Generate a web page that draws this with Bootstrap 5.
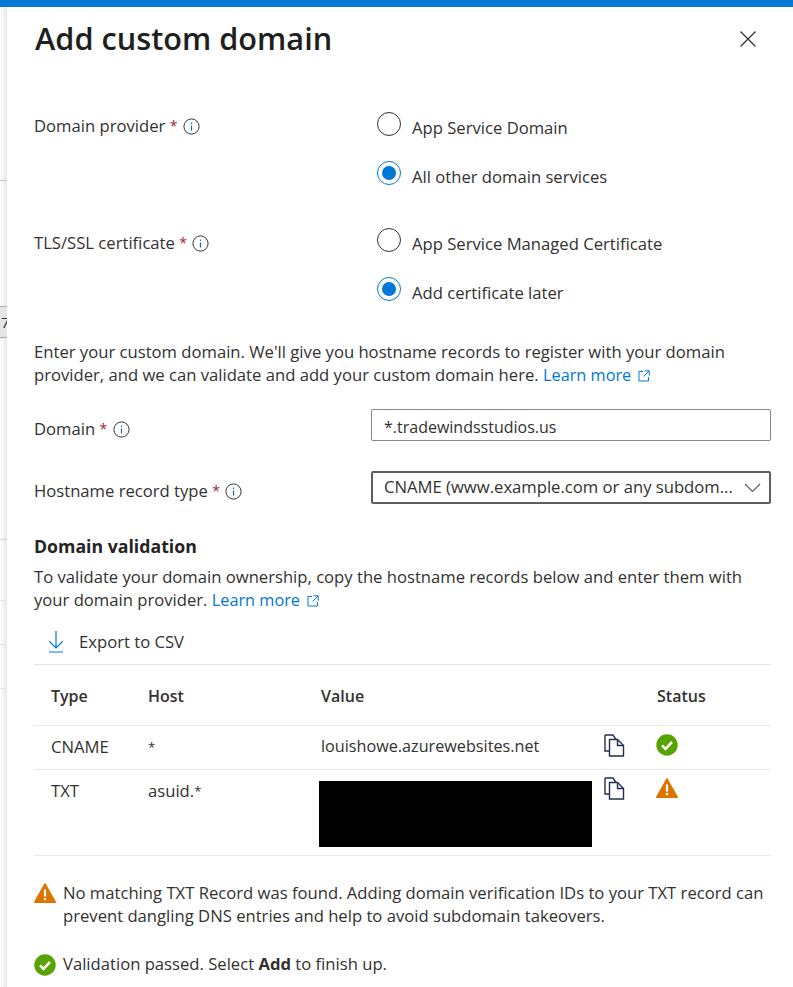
<!DOCTYPE html>
<html lang="en"><head><meta charset="utf-8"><title>Add custom domain</title>
<link rel="stylesheet" href="https://cdn.jsdelivr.net/npm/bootstrap@5.3.0/dist/css/bootstrap.min.css">
<style>
html,body{height:987px;overflow:hidden}
body{font-family:"Open Sans","Noto Sans",sans-serif;font-size:16.65px;color:#323130;background:#fff}
.topbar{height:7px;background:#0078d4}
.shell{height:980px}
.backdrop{width:7px;flex:none;background:linear-gradient(90deg,#fff,#e8e8e8);overflow:hidden}
.bl{height:1px;background:#d4d4d4}
.bl1{margin-top:173px;background:#c4c4c4}
.bcell{margin-top:125px;height:32px;border-top:1px solid #a8a8a8;border-bottom:1px solid #a8a8a8;background:#e6e6e6;font-size:15px;line-height:30px;text-indent:1px;color:#333}
.bl2{margin-top:201px}
.bl3{margin-top:60px;background:#e2e2e2}
.bl4,.bl5{margin-top:43px;background:#e2e2e2}
.panel{flex:1;min-width:0;padding:0 22px 0 27px;line-height:23px}
.head{height:64px;padding-top:11px}
.title{font-size:30.7px;font-weight:600;line-height:40px;margin:0 0 0 1px;color:#201f1e}
.closex{margin:12px 14px 0 0}
.req{color:#a4262c;font-size:14px;vertical-align:1px}
.lab{width:337px;flex:none}
.lab svg{margin-left:1px;vertical-align:-3px}
.labt{padding-top:2px}
.labu{padding-top:3px}
.radios{display:flex;flex-direction:column;gap:25px}
.opt{display:flex;gap:11px;height:24px;padding-left:6px}
.opt span{line-height:24px;position:relative;top:4px}
.ri{width:24px;height:24px;border-radius:50%;border:1.3px solid #323130;flex:none;background:#fff;position:relative}
.ri.on{border-color:#0078d4}
.ri.on::after{content:"";position:absolute;inset:3.7px;border-radius:50%;background:#0078d4}
.g1{margin-top:41px}
.g2{margin-top:43px}
.intro{margin:39px 0 0}
a.lk{color:#0078d4;text-decoration:none;font-size:16.3px}
a.lk svg{margin-left:3px;vertical-align:-1px}
.r1{margin-top:22px}
.r2{margin-top:30px}
.lab2{padding-top:8px}
.inp{flex:1;height:32px;border:1px solid #8a8886;border-radius:2px;padding:0 12px;line-height:35px;font-size:16px;overflow:hidden}
.sel{flex:1;height:33px;border:2px solid #605e5c;border-radius:2px;padding:0 8px 2px 11px;line-height:28px;display:flex;justify-content:space-between;align-items:center;white-space:nowrap}
.sel svg{margin-top:2px}
.h2x{font-size:17.7px;font-weight:700;line-height:23px;margin:31px 0 0;color:#252423}
.desc{margin:7px 0 0}
.exp{margin-top:18px;height:34px;padding-left:14px;gap:15px;line-height:24px}
.dtable{table-layout:fixed;width:737px;margin:0;border-top:1px solid #e5e5e5;--bs-table-color:#323130}
.dtable th,.dtable td{padding:0 0 0 17px;vertical-align:top;border-bottom:1px solid #e8e8e8;font-weight:400;line-height:23px}
.dtable th{height:61px;font-weight:600;padding-top:20px;font-size:16px}
.dtable td{padding-top:9px}
.dtable td.ic{padding:6px 0 0 17px}
.dtable tr.a td{height:44px}
.dtable tr.b td{height:86px}
.dtable tr.b td.ic{padding-top:5px}
.dtable td.st{padding:5px 0 0 16px}
.dtable tr.b td.st{padding-top:4px}
.val{font-size:16.2px}
.ast{font-size:13px;vertical-align:1px}
.blk{background:#000;width:273px;height:66px;margin:2px 0 0 -2px}
.msg{gap:7px;line-height:23px;margin-top:25px}
.msg svg{flex:none;margin-top:2px}
</style></head><body>
<div class="topbar"></div>
<div class="d-flex shell">
<div class="backdrop">
<div class="bl bl1"></div><div class="bcell">7</div><div class="bl bl2"></div><div class="bl bl3"></div><div class="bl bl4"></div><div class="bl bl5"></div>
</div>
<main class="panel">
<div class="head d-flex justify-content-between align-items-start">
<h1 class="title">Add custom domain</h1>
<svg class="closex" width="18" height="18" viewBox="0 0 18 18" fill="none" stroke="#323130" stroke-width="1.3"><path d="M1.5 1.5l15 15M16.5 1.5l-15 15"/></svg>
</div>
<div class="d-flex g1">
<div class="lab labt">Domain provider <span class="req">*</span> <svg width="17" height="17" viewBox="0 0 17 17" fill="none" stroke="#323130"><circle cx="8.5" cy="8.5" r="7.6"/><path d="M8.5 7.5v5M8.5 4.4v1.5" stroke="#0f6cbd" stroke-width="1.2"/></svg></div>
<div class="radios">
<div class="opt"><div class="ri"></div><span>App Service Domain</span></div>
<div class="opt"><div class="ri on"></div><span>All other domain services</span></div>
</div></div>
<div class="d-flex g2">
<div class="lab labu">TLS/SSL certificate <span class="req">*</span> <svg width="17" height="17" viewBox="0 0 17 17" fill="none" stroke="#323130"><circle cx="8.5" cy="8.5" r="7.6"/><path d="M8.5 7.5v5M8.5 4.4v1.5" stroke="#0f6cbd" stroke-width="1.2"/></svg></div>
<div class="radios">
<div class="opt"><div class="ri"></div><span>App Service Managed Certificate</span></div>
<div class="opt"><div class="ri on"></div><span>Add certificate later</span></div>
</div></div>
<p class="intro">Enter your custom domain. We'll give you hostname records to register with your domain provider, and we can validate and add your custom domain here. <a class="lk" href="#">Learn more <svg width="12" height="12" viewBox="0 0 12 12" fill="none" stroke="#0078d4"><path d="M5 1.5H1v9.5h9.5V7M6.5.8h4.7v4.7M11 1L5.500 6.500"/></svg></a></p>
<div class="d-flex r1">
<div class="lab lab2">Domain <span class="req">*</span> <svg width="17" height="17" viewBox="0 0 17 17" fill="none" stroke="#323130"><circle cx="8.5" cy="8.5" r="7.6"/><path d="M8.5 7.5v5M8.5 4.4v1.5" stroke="#0f6cbd" stroke-width="1.2"/></svg></div>
<div class="inp">*.tradewindsstudios.us</div>
</div>
<div class="d-flex r2">
<div class="lab lab2">Hostname record type <span class="req">*</span> <svg width="17" height="17" viewBox="0 0 17 17" fill="none" stroke="#323130"><circle cx="8.5" cy="8.5" r="7.6"/><path d="M8.5 7.5v5M8.5 4.4v1.5" stroke="#0f6cbd" stroke-width="1.2"/></svg></div>
<div class="sel"><span>CNAME (www.example.com or any subdom...</span><svg width="17" height="10" viewBox="0 0 17 10" fill="none" stroke="#605e5c" stroke-width="1.2"><path d="M1 1l7.5 7.5L16 1"/></svg></div>
</div>
<h2 class="h2x">Domain validation</h2>
<p class="desc">To validate your domain ownership, copy the hostname records below and enter them with your domain provider. <a class="lk" href="#">Learn more <svg width="12" height="12" viewBox="0 0 12 12" fill="none" stroke="#0078d4"><path d="M5 1.5H1v9.5h9.5V7M6.5.8h4.7v4.7M11 1L5.500 6.500"/></svg></a></p>
<div class="d-flex exp">
<svg width="16" height="23" viewBox="0 0 16 23" fill="none" stroke="#0078d4" stroke-width="1.2"><path d="M8 1v17M1.5 11.5L8 18l6.5-6.5M1 22h14"/></svg>
<span>Export to CSV</span>
</div>
<table class="table dtable">
<colgroup><col style="width:97px"><col style="width:173px"><col style="width:283px"><col style="width:53px"><col></colgroup>
<thead><tr><th>Type</th><th>Host</th><th>Value</th><th></th><th>Status</th></tr></thead>
<tbody>
<tr class="a"><td>CNAME</td><td><span class="ast">*</span></td><td class="val">louishowe.azurewebsites.net</td>
<td class="ic"><svg width="21" height="23" viewBox="0 0 21 23" fill="none" stroke="#22304f" stroke-width="1.4"><path d="M1 1h8l3 4.500M5.500 17H1V1"/><path d="M5.500 5.500h8l6 6v10.500h-14z" fill="#fff"/><path d="M13.500 5.500v6h6"/></svg></td>
<td class="st"><svg width="22" height="22" viewBox="0 0 22 22"><circle cx="11" cy="11" r="10.700" fill="#57a300"/><path d="M6 11.300l3.500 3.500L16 8" fill="none" stroke="#fff" stroke-width="2.600"/></svg></td></tr>
<tr class="b"><td>TXT</td><td>asuid.<span class="ast">*</span></td><td><div class="blk"></div></td>
<td class="ic"><svg width="21" height="23" viewBox="0 0 21 23" fill="none" stroke="#22304f" stroke-width="1.4"><path d="M1 1h8l3 4.500M5.500 17H1V1"/><path d="M5.500 5.500h8l6 6v10.500h-14z" fill="#fff"/><path d="M13.500 5.500v6h6"/></svg></td>
<td class="st"><svg width="22" height="20" viewBox="0 0 22 20"><path d="M11 .8L21.300 19.200H.7z" fill="#db7500" stroke="#db7500" stroke-width="1.400" stroke-linejoin="round"/><path d="M11 6.500v7M11 15v2.300" stroke="#fff" stroke-width="2.200"/></svg></td></tr>
</tbody></table>
<div class="d-flex msg">
<svg width="22" height="20" viewBox="0 0 22 20"><path d="M11 .8L21.300 19.200H.7z" fill="#db7500" stroke="#db7500" stroke-width="1.400" stroke-linejoin="round"/><path d="M11 6.500v7M11 15v2.300" stroke="#fff" stroke-width="2.200"/></svg>
<div>No matching TXT Record was found. Adding domain verification IDs to your TXT record can prevent dangling DNS entries and help to avoid subdomain takeovers.</div>
</div>
<div class="d-flex msg">
<svg width="22" height="22" viewBox="0 0 22 22"><circle cx="11" cy="11" r="10.700" fill="#57a300"/><path d="M6 11.300l3.500 3.500L16 8" fill="none" stroke="#fff" stroke-width="2.600"/></svg>
<div>Validation passed. Select <b>Add</b> to finish up.</div>
</div>
</main></div>
</body></html>
